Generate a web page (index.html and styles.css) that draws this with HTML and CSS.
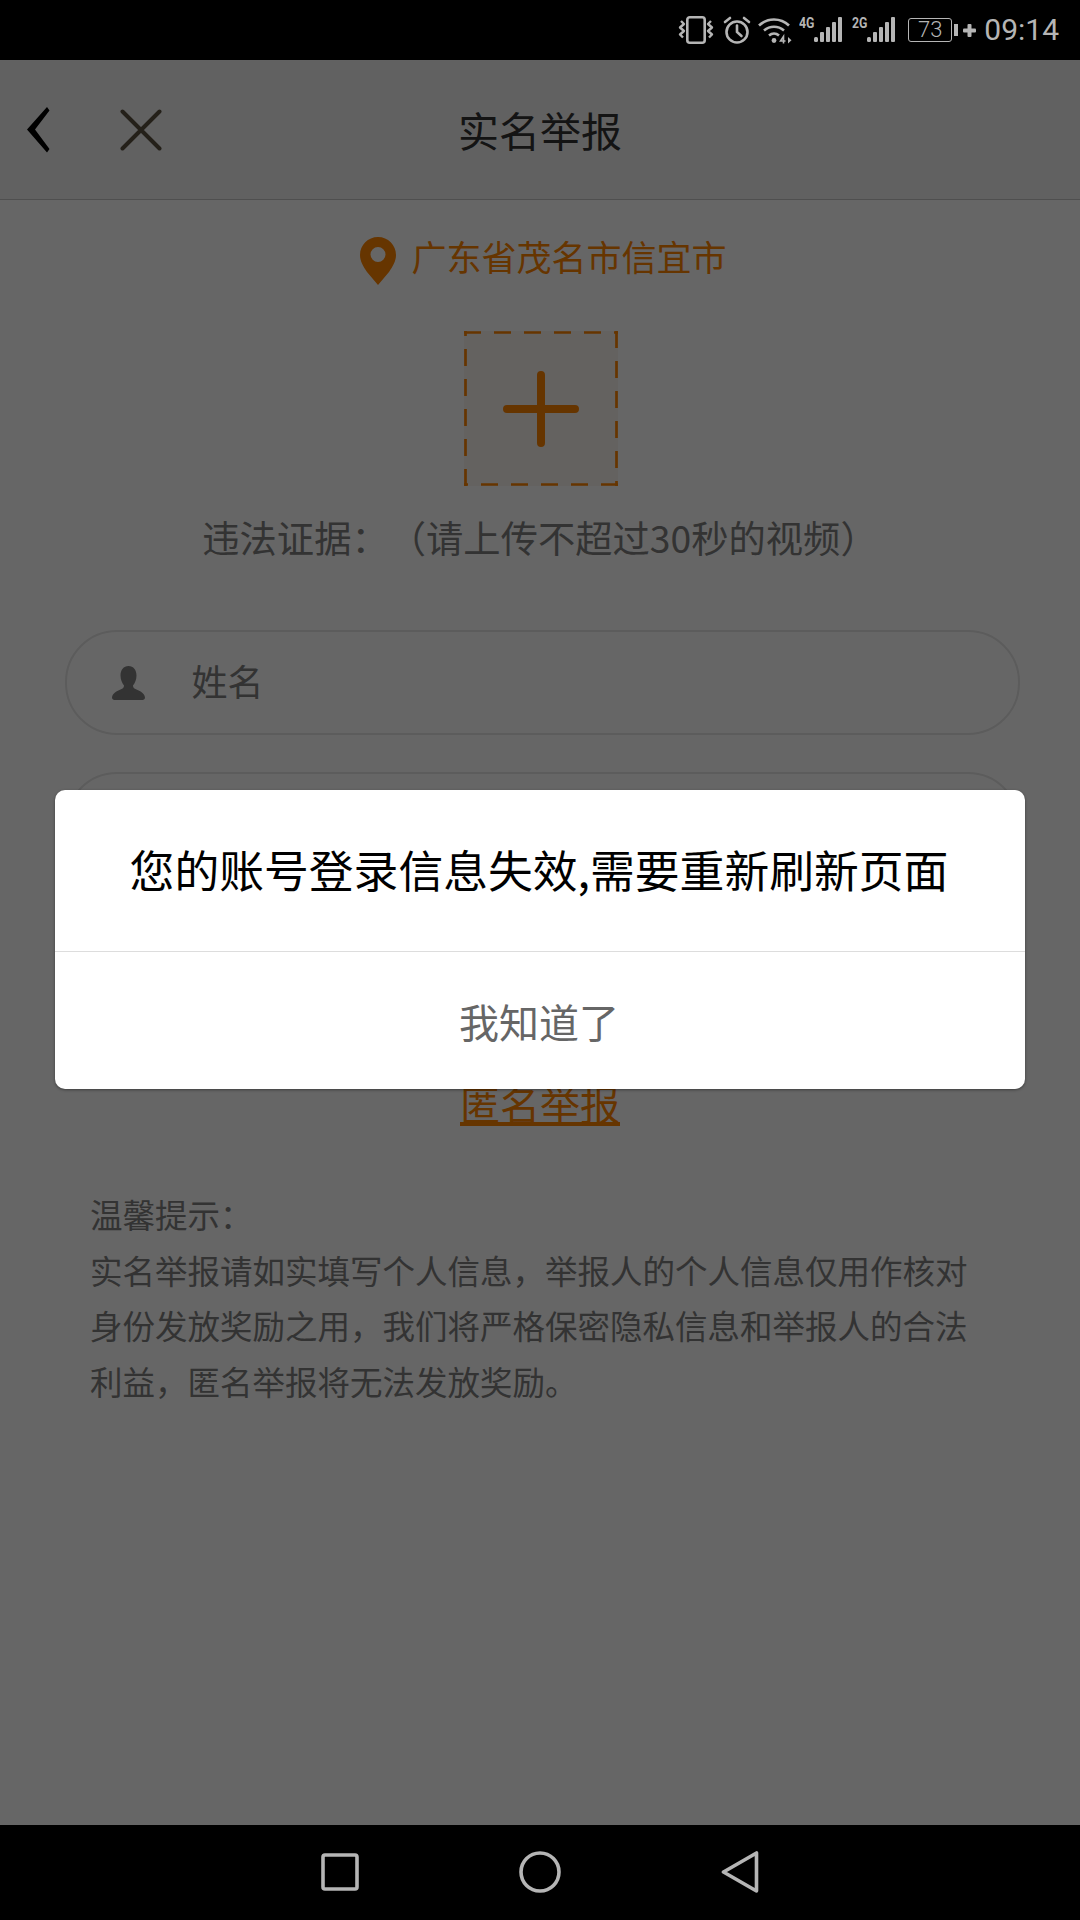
FILE: index.html
```html
<!DOCTYPE html>
<html lang="zh-CN">
<head>
    <meta charset="UTF-8">
    <meta name="viewport" content="width=device-width, initial-scale=1.0">
    <link rel="stylesheet" href="styles.css">
</head>
<body>
    <div class="status-bar">
        <svg class="st-vibrate" width="36" height="28" viewBox="0 0 36 28" fill="none" stroke="#b5b5b5" stroke-width="2.4" stroke-linejoin="round">
            <rect x="9.300" y="1.300" width="17.400" height="25.400" rx="2.500" stroke-width="2.600"/>
            <path d="M3 5l3 3-4 3.500 4 3.500-4 3.500 3 3"/>
            <path d="M33 5l-3 3 4 3.500-4 3.500 4 3.500-3 3"/>
        </svg>
        <svg class="st-alarm" width="28" height="28" viewBox="0 0 28 28" fill="none" stroke="#b5b5b5" stroke-width="2.6" stroke-linecap="round">
            <circle cx="14" cy="16" r="10.500"/>
            <path d="M14 9.500v6.500l4.500 4"/>
            <path d="M2 6l5-4M26 6l-5-4"/>
        </svg>
        <svg class="st-wifi" width="35" height="28" viewBox="0 0 35 28" fill="none" stroke="#b5b5b5" stroke-width="2.6">
            <path d="M1 9.500C9.500 1.500 22.500 1.500 31 9.500"/>
            <path d="M6 14.500C12 9.500 20 9.500 26 14.500"/>
            <path d="M11 19.500C14 17 18 17 21 19.500"/>
            <circle cx="16" cy="24.500" r="2.400" fill="#b5b5b5" stroke="none"/>
            <path d="M25.500 27.500v-7l-3 4.500h5" stroke-width="1.600"/>
            <path d="M30 21v6.500l3.500-3.200z" fill="#b5b5b5" stroke="none"/>
        </svg>
        <div class="st-net">
            <span class="st-net-label">4G</span>
            <svg width="28" height="25" viewBox="0 0 28 25" fill="#b5b5b5">
                <rect x="0" y="20" width="4" height="5" rx="1.500"/>
                <rect x="6" y="15" width="4" height="10" rx="1"/>
                <rect x="12" y="10" width="4" height="15" rx="1"/>
                <rect x="18" y="5" width="4" height="20" rx="1"/>
                <rect x="24" y="0" width="4" height="25" rx="1"/>
            </svg>
        </div>
        <div class="st-net st-net-second">
            <span class="st-net-label">2G</span>
            <svg width="28" height="25" viewBox="0 0 28 25" fill="#b5b5b5">
                <rect x="0" y="20" width="4" height="5" rx="1.500"/>
                <rect x="6" y="15" width="4" height="10" rx="1"/>
                <rect x="12" y="10" width="4" height="15" rx="1"/>
                <rect x="18" y="5" width="4" height="20" rx="1"/>
                <rect x="24" y="0" width="4" height="25" rx="1"/>
            </svg>
        </div>
        <div class="st-battery">73</div>
        <div class="st-battery-nub"></div>
        <svg class="st-plus" width="13" height="13" viewBox="0 0 13 13" fill="#b5b5b5">
            <rect x="0" y="4.500" width="13" height="4" rx="1"/>
            <rect x="4.500" y="0" width="4" height="13" rx="1"/>
        </svg>
        <div class="st-time">09:14</div>
    </div>

    <div class="page">
        <div class="header">
            <svg class="back-icon" width="23" height="46" viewBox="0 0 23 46">
                <path d="M20 0L22.500 3.500L8 22.500L22.500 42L20 45.500L0 22.500Z" fill="#000"/>
            </svg>
            <svg class="close-icon" width="42" height="42" viewBox="0 0 42 42" fill="none" stroke="#5a5040" stroke-width="4" stroke-linecap="round">
                <path d="M2.500 2.500L39.500 39.500M39.500 2.500L2.500 39.500"/>
            </svg>
            <div class="header-title">实名举报</div>
        </div>

        <div class="location">
            <svg width="36" height="48" viewBox="0 0 36 48">
                <path fill-rule="evenodd" fill="#ff8400" d="M18 0C8 0 0 8 0 18C0 24 3 29 7 35L18 48L29 35C33 29 36 24 36 18C36 8 28 0 18 0ZM18 10A7.500 7.500 0 1 1 18 25A7.500 7.500 0 1 1 18 10Z"/>
            </svg>
            <span class="location-text">广东省茂名市信宜市</span>
        </div>

        <div class="upload-box">
            <svg class="upload-dash" width="154" height="155" viewBox="0 0 154 155" fill="none" stroke="#ff8400" stroke-width="2.700" stroke-dasharray="17 13">
                <path d="M0 1.500H154M152.500 0V155M154 153.500H0M1.500 155V0"/>
            </svg>
            <svg width="76" height="76" viewBox="0 0 76 76" fill="none" stroke="#ff8400" stroke-width="8" stroke-linecap="round">
                <path d="M38 4V72M4 38H72"/>
            </svg>
        </div>
        <div class="upload-caption">违法证据：（请上传不超过30秒的视频）</div>

        <div class="field">
            <svg class="field-icon" width="33" height="34" viewBox="0 0 33 34">
                <path fill="#808080" d="M16.500 0C11.500 0 8.500 4 8.500 9.500C8.500 13.500 10 17 12 19.500C12 21.500 11 22.500 8.500 23.500C4 25.200 0.500 27.500 0 31.500C0 33 1 34 2.500 34H30.500C32 34 33 33 33 31.500C32.500 27.500 29 25.200 24.500 23.500C22 22.500 21 21.500 21 19.500C23 17 24.500 13.500 24.500 9.500C24.500 4 21.500 0 16.500 0Z"/>
            </svg>
            <span class="field-text">姓名</span>
        </div>
        <div class="field field-second"></div>

        <div class="anon-link">匿名举报</div>

        <div class="notes">
            <p>温馨提示：</p>
            <p>实名举报请如实填写个人信息，举报人的个人信息仅用作核对身份发放奖励之用，我们将严格保密隐私信息和举报人的合法利益，匿名举报将无法发放奖励。</p>
        </div>

        <div class="overlay">
            <div class="dialog">
                <div class="dialog-msg">您的账号登录信息失效,需要重新刷新页面</div>
                <div class="dialog-btn">我知道了</div>
            </div>
        </div>
    </div>

    <div class="nav-bar">
        <svg width="38" height="38" viewBox="0 0 38 38" fill="none" stroke="#b5b5b5" stroke-width="3.600">
            <rect x="2" y="2" width="34" height="34" rx="2"/>
        </svg>
        <svg width="42" height="42" viewBox="0 0 42 42" fill="none" stroke="#b5b5b5" stroke-width="3.600">
            <circle cx="21" cy="21" r="19"/>
        </svg>
        <svg width="38" height="42" viewBox="0 0 38 42" fill="none" stroke="#b5b5b5" stroke-width="3.600" stroke-linejoin="round">
            <path d="M2.500 21L35.500 2V40Z"/>
        </svg>
    </div>
</body>
</html>
```

FILE: styles.css
```css
* {
    box-sizing: border-box;
}

body {
    margin: 0;
    width: 1080px;
    height: 1920px;
    overflow: hidden;
    display: flex;
    flex-direction: column;
    background: #000;
    font-family: "Noto Sans CJK SC", "Noto Sans", sans-serif;
    text-spacing-trim: space-all;
}

/* status bar */
.status-bar {
    height: 60px;
    flex: none;
    background: #000;
    display: flex;
    align-items: center;
    justify-content: flex-end;
    padding: 0 21px 0 0;
    color: #b5b5b5;
}

.st-vibrate {
    margin-right: 9px;
}

.st-alarm {
    margin-right: 7px;
}

.st-wifi {
    margin-right: 6px;
}

.st-net {
    display: flex;
    align-items: flex-start;
    height: 25px;
    margin-top: -1px;
}

.st-net-second {
    margin-left: 10px;
}

.st-net-label {
    width: 15px;
    font-family: "Roboto", sans-serif;
    font-size: 15px;
    font-weight: 700;
    line-height: 12px;
    transform: scaleX(0.82);
    transform-origin: left top;
}

.st-battery {
    width: 44px;
    height: 24px;
    margin-left: 13px;
    border: 1.500px solid #b5b5b5;
    border-radius: 3px;
    font-family: "Roboto", sans-serif;
    font-size: 22px;
    font-weight: 300;
    line-height: 21px;
    text-align: center;
}

.st-battery-nub {
    width: 4px;
    height: 12px;
    margin-left: 2px;
    background: #b5b5b5;
}

.st-plus {
    margin-left: 5px;
}

.st-time {
    margin-left: 8px;
    font-family: "Roboto", sans-serif;
    font-size: 30px;
    line-height: 36px;
}

/* page under the overlay */
.page {
    position: relative;
    flex: 1;
    background: #fff;
    display: flex;
    flex-direction: column;
    align-items: center;
}

.header {
    position: relative;
    width: 100%;
    height: 140px;
    flex: none;
    background: #f3f3f3;
    border-bottom: 1px solid #c6c6c6;
    display: flex;
    align-items: center;
    justify-content: center;
}

.back-icon {
    position: absolute;
    left: 27px;
    top: 47px;
}

.close-icon {
    position: absolute;
    left: 120px;
    top: 49px;
}

.header-title {
    font-size: 41px;
    color: #333;
    margin-bottom: 2px;
}

.location {
    display: flex;
    align-items: center;
    gap: 15px;
    margin-top: 37px;
    margin-left: 7px;
    height: 48px;
    font-size: 35px;
    color: #ff8400;
}

.location-text {
    margin-bottom: 12px;
}

.upload-box {
    position: relative;
    width: 154px;
    height: 155px;
    margin-top: 46px;
    margin-left: 2px;
    background: #faf6f0;
    display: flex;
    align-items: center;
    justify-content: center;
}

.upload-dash {
    position: absolute;
    left: 0;
    top: 0;
}

.upload-caption {
    margin-top: 25px;
    height: 52px;
    font-size: 37.300px;
    line-height: 52px;
    color: #808080;
}

.field {
    width: 955px;
    height: 105px;
    margin-top: 67px;
    margin-left: 4px;
    border: 2px solid #e6e6e6;
    border-radius: 52px;
    display: flex;
    align-items: center;
    padding-left: 45px;
}

.field-second {
    margin-top: 37px;
}

.field-text {
    margin-left: 47px;
    margin-bottom: 6px;
    font-size: 36px;
    color: #808080;
}

.anon-link {
    margin-top: 198px;
    font-size: 40px;
    line-height: 56px;
    color: #ff8400;
    text-decoration: underline;
}

.notes {
    width: 900px;
    margin-top: 55px;
    font-size: 32.500px;
    line-height: 55.500px;
    color: #808080;
}

.notes p {
    margin: 0;
}

/* dim layer and dialog */
.overlay {
    position: absolute;
    left: 0;
    top: 0;
    width: 100%;
    height: 100%;
    background: rgba(0, 0, 0, 0.6);
    display: flex;
    justify-content: center;
    align-items: flex-start;
    padding-top: 730px;
}

.dialog {
    width: 970px;
    height: 299px;
    background: #fff;
    border-radius: 10px;
    display: flex;
    flex-direction: column;
    box-shadow: 0 1px 3px rgba(0, 0, 0, 0.4);
}

.dialog-msg {
    height: 162px;
    flex: none;
    border-bottom: 1px solid #ddd;
    display: flex;
    align-items: center;
    justify-content: center;
    padding: 0 2px 4px 0;
    font-size: 44.800px;
    color: #000;
}

.dialog-btn {
    flex: 1;
    display: flex;
    align-items: center;
    justify-content: center;
    padding-right: 2px;
    font-size: 40px;
    color: #666;
}

/* navigation bar */
.nav-bar {
    height: 95px;
    flex: none;
    background: #000;
    display: grid;
    grid-template-columns: 38px 42px 38px;
    justify-content: center;
    column-gap: 160px;
    align-items: center;
    padding-bottom: 2px;
}
```
